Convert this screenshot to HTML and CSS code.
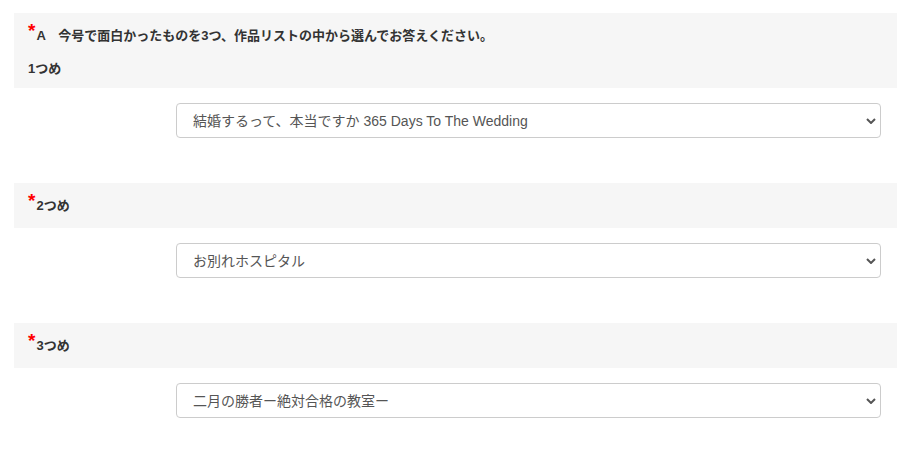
FILE: index.html
```html
<!DOCTYPE html>
<html lang="ja">
<head>
<meta charset="utf-8">
<link rel="stylesheet" href="styles.css">
</head>
<body>
<div class="form">
  <section class="question">
    <div class="panel panel-lead">
      <div class="title"><span class="req">*</span>A　今号で面白かったものを3つ、作品リストの中から選んでお答えください。</div>
      <div class="sub">1つめ</div>
    </div>
    <div class="field">
      <select class="select">
        <option>結婚するって、本当ですか 365 Days To The Wedding</option>
      </select>
      <svg class="chev" width="10" height="6" viewBox="0 0 10 6"><path d="M1 1 L5 5 L9 1" fill="none" stroke="#555" stroke-width="2"/></svg>
    </div>
  </section>
  <section class="question">
    <div class="panel">
      <div class="title"><span class="req">*</span>2つめ</div>
    </div>
    <div class="field">
      <select class="select">
        <option>お別れホスピタル</option>
      </select>
      <svg class="chev" width="10" height="6" viewBox="0 0 10 6"><path d="M1 1 L5 5 L9 1" fill="none" stroke="#555" stroke-width="2"/></svg>
    </div>
  </section>
  <section class="question">
    <div class="panel">
      <div class="title"><span class="req">*</span>3つめ</div>
    </div>
    <div class="field">
      <select class="select">
        <option>二月の勝者ー絶対合格の教室ー</option>
      </select>
      <svg class="chev" width="10" height="6" viewBox="0 0 10 6"><path d="M1 1 L5 5 L9 1" fill="none" stroke="#555" stroke-width="2"/></svg>
    </div>
  </section>
</div>
</body>
</html>
```
FILE: styles.css
```css
html, body {
  margin: 0;
  padding: 0;
  background: #fff;
}
body {
  font-family: "Liberation Sans", "Noto Sans CJK JP", sans-serif;
  color: #333;
}
.form {
  padding: 13px 16px 0 14px;
  display: flex;
  flex-direction: column;
  gap: 45px;
}
.question {
  display: flex;
  flex-direction: column;
  gap: 15px;
}
.panel {
  background: #f6f6f6;
  padding: 13px 14px 12px;
}
.panel-lead {
  padding-bottom: 9px;
}
.title, .sub {
  font-size: 13px;
  font-weight: bold;
  line-height: 20px;
}
.sub {
  margin-top: 13px;
}
.req {
  color: #f00;
  font-size: 19px;
  line-height: 0;
  vertical-align: 3px;
  margin-right: 1px;
}
.field {
  position: relative;
  margin-left: 162px;
  margin-right: 16px;
}
.select {
  display: block;
  width: 100%;
  height: 35px;
  box-sizing: border-box;
  border: 1px solid #ccc;
  border-radius: 4px;
  background: #fff;
  color: #555;
  font-family: "Liberation Sans", "Noto Sans CJK JP", sans-serif;
  font-size: 14px;
  padding: 0 30px 0 16px;
  appearance: none;
  -webkit-appearance: none;
}
.chev {
  position: absolute;
  right: 5px;
  top: 15px;
  pointer-events: none;
}
```
